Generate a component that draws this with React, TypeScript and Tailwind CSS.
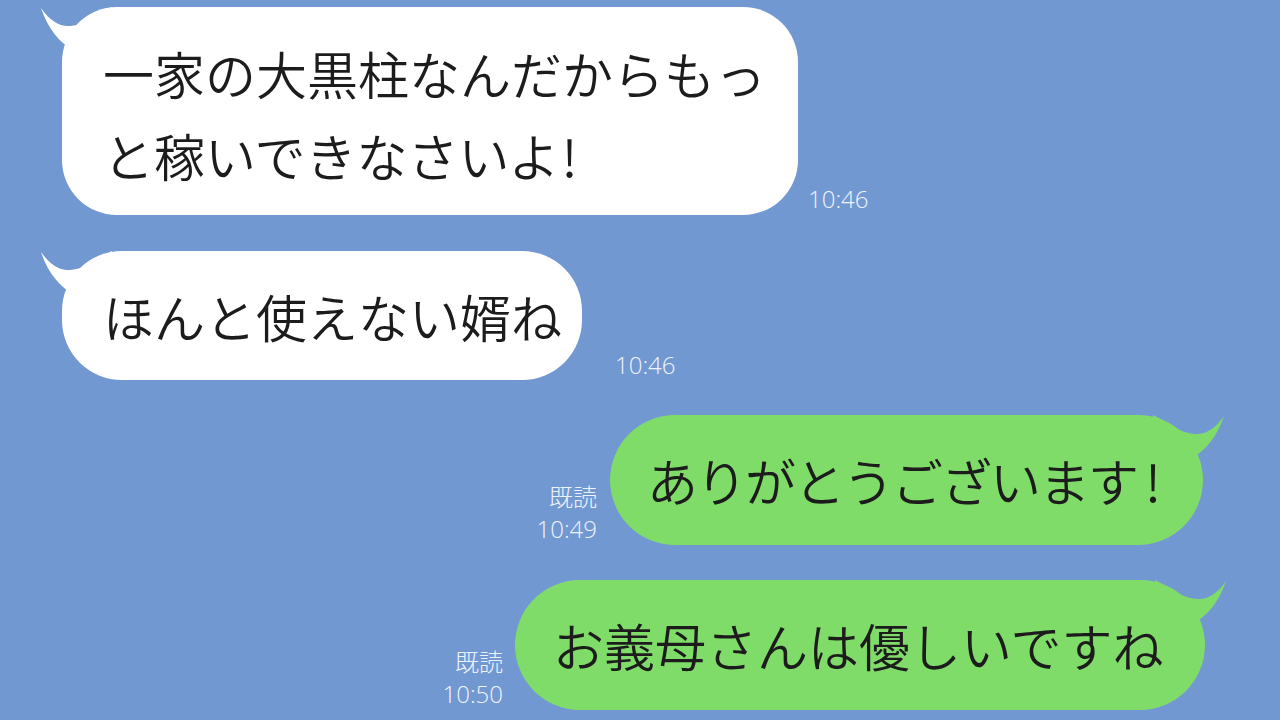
import React from 'react';

const jp = { fontFamily: '"Noto Sans CJK JP", "Noto Sans", sans-serif' };
const meta = { fontFamily: '"Open Sans", "Noto Sans CJK JP", sans-serif' };

function Tail({ color, side }: { color: string; side: 'left' | 'right' }) {
  return (
    <svg
      className={
        side === 'left'
          ? 'absolute left-[-24px] top-0 w-[80px] h-[45px]'
          : 'absolute right-[-24px] top-0 w-[80px] h-[45px] -scale-x-100'
      }
      viewBox="0 0 80 45"
    >
      <path
        d="M3 1 C 12 14, 22 20, 32 19 C 48 18, 58 8, 74 0 L 74 44 L 36 44 C 22 36, 10 22, 3 1 Z"
        fill={color}
      />
    </svg>
  );
}

function Time({ label }: { label: string }) {
  return (
    <span className="text-[24px] leading-[28px] font-light text-[#eef3fb]" style={meta}>
      {label}
    </span>
  );
}

function Read({ time }: { time: string }) {
  return (
    <div className="flex flex-col items-end text-[24px] leading-[32px] font-light text-[#eef3fb]" style={meta}>
      <span>既読</span>
      <span>{time}</span>
    </div>
  );
}

export default function App() {
  return (
    <div className="w-[1280px] h-[720px] overflow-hidden bg-[#7298d2] flex flex-col pt-[7px]">
      {/* incoming 1 */}
      <div className="flex items-end pl-[62px]">
        <div className="relative w-[736px] h-[208px] rounded-[55px] bg-white pl-[41px] pt-[25px]">
          <Tail color="#ffffff" side="left" />
          <p className="relative text-[51px] leading-[82px] font-[350] text-[#1c1c1c] whitespace-nowrap" style={jp}>
            一家の大黒柱なんだからもっ
            <br />
            と稼いできなさいよ<span className="pl-[2px]">!</span>
          </p>
        </div>
        <div className="ml-[10px] mb-[1px]">
          <Time label="10:46" />
        </div>
      </div>

      {/* incoming 2 */}
      <div className="flex items-end pl-[62px] mt-[36px]">
        <div className="relative w-[520px] h-[129px] rounded-[60px] bg-white pl-[41px] flex items-center">
          <Tail color="#ffffff" side="left" />
          <p className="relative text-[51px] leading-[82px] font-[350] text-[#1c1c1c] whitespace-nowrap" style={jp}>
            ほんと使えない婿ね
          </p>
        </div>
        <div className="ml-[33px]">
          <Time label="10:46" />
        </div>
      </div>

      {/* outgoing 1 */}
      <div className="flex items-end justify-end pr-[77px] mt-[35px]">
        <Read time="10:49" />
        <div className="relative ml-[13px] w-[593px] h-[130px] rounded-full bg-[#80dc69] pl-[37px] flex items-center">
          <Tail color="#80dc69" side="right" />
          <p className="relative text-[51px] leading-[82px] font-[350] tracking-[-2px] text-[#1c1c1c] whitespace-nowrap" style={jp}>
            ありがとうございます<span className="pl-[8px]">!</span>
          </p>
        </div>
      </div>

      {/* outgoing 2 */}
      <div className="flex items-end justify-end pr-[75px] mt-[35px]">
        <Read time="10:50" />
        <div className="relative ml-[12px] w-[690px] h-[130px] rounded-full bg-[#80dc69] pl-[38px] flex items-center">
          <Tail color="#80dc69" side="right" />
          <p className="relative text-[51px] leading-[82px] font-[350] text-[#1c1c1c] whitespace-nowrap" style={jp}>
            お義母さんは優しいですね
          </p>
        </div>
      </div>
    </div>
  );
}
